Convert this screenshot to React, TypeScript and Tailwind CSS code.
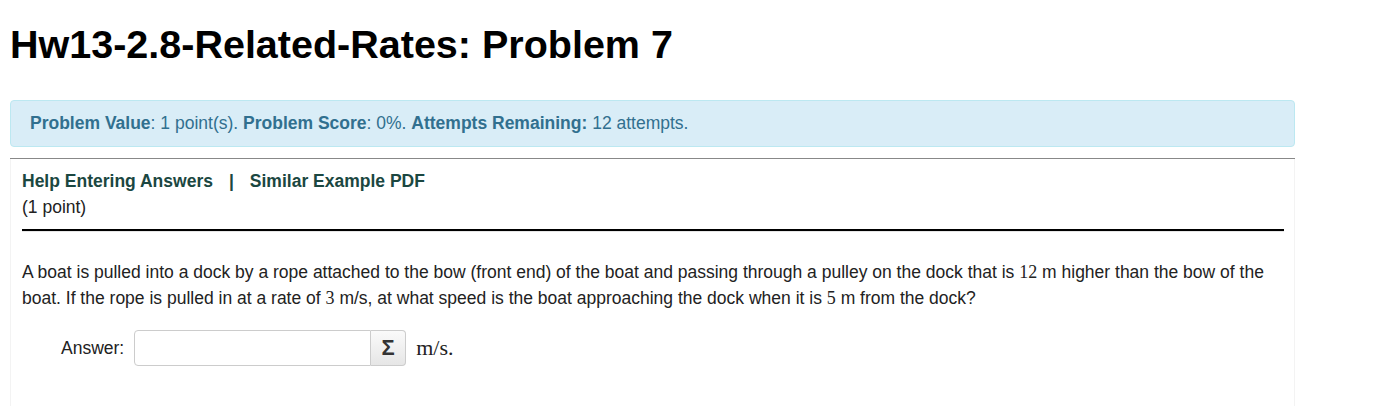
import React from "react";

const sans = { fontFamily: '"Liberation Sans", Arial, sans-serif' };

function M({ children, cls = "text-[18px]" }: { children: React.ReactNode; cls?: string }) {
  return <span className={`${cls} leading-none font-['Liberation_Serif',serif]`}>{children}</span>;
}

export default function App() {
  return (
    <div className="w-[1386px] h-[412px] bg-white overflow-hidden font-['Liberation_Sans',Arial,sans-serif] text-[#222]">
      <div className="ml-[10px] w-[1285px]">
        <h1 className="pt-[22px] text-[39.5px] leading-[44px] font-bold text-black">
          Hw13-2.8-Related-Rates: Problem 7
        </h1>
        <div className="mt-[34px] h-[47px] flex items-center px-[19px] bg-[#d9edf7] border border-[#bce8f1] rounded-[4px] text-[#31708f] text-[17.5px]">
          <span>
            <b>Problem Value</b>: 1 point(s). <b>Problem Score</b>: 0%. <b>Attempts Remaining:</b> 12 attempts.
          </span>
        </div>
        <div className="mt-[11px] border-t border-[#888]">
          <div className="border-l border-r border-[#f3f3f3] pl-[11px] pr-[10px] pt-[9px] pb-[40px]">
            <div className="text-[17.5px] leading-[26px] font-bold text-[#1b4741]">
              <span>Help Entering Answers</span>
              <span className="mx-[16px] text-[#1b4741]">|</span>
              <span>Similar Example PDF</span>
            </div>
            <div className="text-[17.5px] leading-[26px]">(1 point)</div>
            <div className="mt-[9px] h-[3px] border-t-2 border-black border-b border-b-[#e6e6e6]" />
            <p className="mt-[27px] text-[17.5px] leading-[26px]">
              A boat is pulled into a dock by a rope attached to the bow (front end) of the boat and passing through a pulley on the dock that is <M>12</M> m higher than the bow of the boat. If the rope is pulled in at a rate of <M>3</M> m/s, at what speed is the boat approaching the dock when it is <M>5</M> m from the dock?
            </p>
            <div className="mt-[19px] flex items-center h-[36px] pl-[39px]">
              <span className="text-[17.5px] mr-[10px]">Answer:</span>
              <div className="w-[237px] h-[36px] border border-[#ccc] rounded-l-[4px] bg-white" />
              <div className="w-[35px] h-[36px] border border-l-0 border-[#ccc] rounded-r-[4px] bg-gradient-to-b from-[#fafafa] to-[#e6e6e6] flex items-center justify-center">
                <span className="text-[22px] font-bold text-[#333] leading-none" style={sans}>Σ</span>
              </div>
              <M cls="ml-[10px] text-[22px]">m/s.</M>
            </div>
          </div>
        </div>
      </div>
    </div>
  );
}
